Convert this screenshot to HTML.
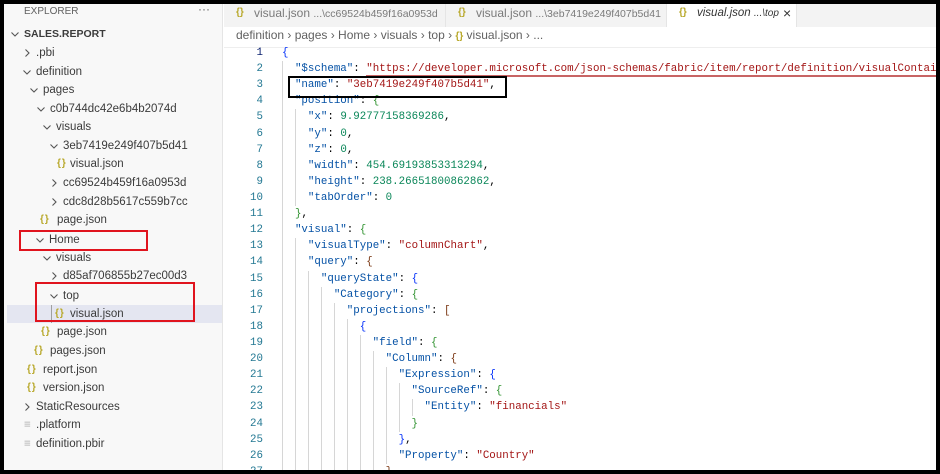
<!DOCTYPE html>
<html><head><meta charset="utf-8"><style>
*{margin:0;padding:0;box-sizing:border-box}
body{width:940px;height:474px;overflow:hidden;background:#000;position:relative;font-family:"Liberation Sans",sans-serif}
#frame{position:absolute;left:4px;top:4px;width:932px;height:466px;background:#fff;overflow:hidden}
#side{position:absolute;left:0;top:0;width:219px;height:466px;background:#f8f8f8;border-right:1px solid #e5e5e5}
.r{position:absolute;left:0;width:219px;height:18px;font-size:11.5px;color:#3b3b3b;line-height:18px;white-space:nowrap}
.cv{position:absolute;top:4px;width:10px;height:10px}
.br{position:absolute;color:#b8a82a;font-size:10px;font-weight:bold;letter-spacing:1px}
#tabs{position:absolute;left:220px;top:0;width:712px;height:23px;background:#f3f3f3}
.tab{position:absolute;top:0;height:23px;font-size:12px;color:#7a7a7a;line-height:18px;border-right:1px solid #e5e5e5;white-space:nowrap}
#crumb{position:absolute;left:232px;top:24px;font-size:12px;color:#616161;white-space:nowrap}
#code{position:absolute;left:220px;top:41px;width:712px;font-family:"Liberation Mono",monospace;font-size:10.8px}
.l{height:16.12px;line-height:16.12px;white-space:pre;position:relative}
.n{position:absolute;left:0;width:39px;text-align:right;color:#237893}
.c{position:absolute;left:58px}
.g{display:inline-block;width:2ch;height:16.12px;border-left:1px solid #d6d6d6;vertical-align:top}
.k{color:#0451a5}.s{color:#a31515}.m{color:#098658}
.b1{color:#0431fa}.b2{color:#319331}.b3{color:#7b3814}
.red{position:absolute;border:2px solid #e0141e}
</style></head><body>
<svg width="0" height="0" style="position:absolute"><defs>
<symbol id="d" viewBox="0 0 10 10"><path d="M1.5 3.5l3.5 3.5 3.5-3.5" stroke="#555" stroke-width="1.1" fill="none"/></symbol>
<symbol id="rt" viewBox="0 0 10 10"><path d="M3.5 1.5l3.5 3.5-3.5 3.5" stroke="#555" stroke-width="1.1" fill="none"/></symbol>
</defs></svg>
<div id="frame">
<div id="side">
  <div style="position:absolute;left:20px;top:2px;font-size:10px;color:#616161">EXPLORER</div>
  <div style="position:absolute;left:194px;top:-2px;font-size:12px;color:#616161">···</div>
  <div class="r" style="top:21px"><svg class="cv" style="left:6px"><use href="#d"/></svg><b style="position:absolute;left:20px;font-size:10.5px">SALES.REPORT</b></div>
  <div class="r" style="top:40px"><svg class="cv" style="left:18px"><use href="#rt"/></svg><span style="position:absolute;left:32px">.pbi</span></div>
  <div class="r" style="top:59px"><svg class="cv" style="left:18px"><use href="#d"/></svg><span style="position:absolute;left:32px">definition</span></div>
  <div class="r" style="top:77px"><svg class="cv" style="left:25px"><use href="#d"/></svg><span style="position:absolute;left:39px">pages</span></div>
  <div class="r" style="top:96px"><svg class="cv" style="left:32px"><use href="#d"/></svg><span style="position:absolute;left:46px">c0b744dc42e6b4b2074d</span></div>
  <div class="r" style="top:114px"><svg class="cv" style="left:38px"><use href="#d"/></svg><span style="position:absolute;left:52px">visuals</span></div>
  <div class="r" style="top:133px"><svg class="cv" style="left:45px"><use href="#d"/></svg><span style="position:absolute;left:59px">3eb7419e249f407b5d41</span></div>
  <div class="r" style="top:151px"><span class="br" style="left:53px">{}</span><span style="position:absolute;left:66px">visual.json</span></div>
  <div class="r" style="top:170px"><svg class="cv" style="left:45px"><use href="#rt"/></svg><span style="position:absolute;left:59px">cc69524b459f16a0953d</span></div>
  <div class="r" style="top:189px"><svg class="cv" style="left:45px"><use href="#rt"/></svg><span style="position:absolute;left:59px">cdc8d28b5617c559b7cc</span></div>
  <div class="r" style="top:207px"><span class="br" style="left:36px">{}</span><span style="position:absolute;left:53px">page.json</span></div>
  <div class="r" style="top:227px"><svg class="cv" style="left:31px"><use href="#d"/></svg><span style="position:absolute;left:45px">Home</span></div>
  <div class="r" style="top:245px"><svg class="cv" style="left:38px"><use href="#d"/></svg><span style="position:absolute;left:52px">visuals</span></div>
  <div class="r" style="top:263px"><svg class="cv" style="left:45px"><use href="#rt"/></svg><span style="position:absolute;left:59px">d85af706855b27ec00d3</span></div>
  <div class="r" style="top:283px"><svg class="cv" style="left:45px"><use href="#d"/></svg><span style="position:absolute;left:59px">top</span></div>
  <div class="r" style="top:301px;left:3px;width:215px;background:#e4e6f1"><span style="position:absolute;left:44px;top:0;width:1px;height:18px;background:#a0a0a0"></span><span class="br" style="left:48px">{}</span><span style="position:absolute;left:63px">visual.json</span></div>
  <div class="r" style="top:319px"><span class="br" style="left:37px">{}</span><span style="position:absolute;left:53px">page.json</span></div>
  <div class="r" style="top:338px"><span class="br" style="left:30px">{}</span><span style="position:absolute;left:46px">pages.json</span></div>
  <div class="r" style="top:357px"><span class="br" style="left:23px">{}</span><span style="position:absolute;left:39px">report.json</span></div>
  <div class="r" style="top:375px"><span class="br" style="left:23px">{}</span><span style="position:absolute;left:39px">version.json</span></div>
  <div class="r" style="top:394px"><svg class="cv" style="left:18px"><use href="#rt"/></svg><span style="position:absolute;left:32px">StaticResources</span></div>
  <div class="r" style="top:412px"><span style="position:absolute;left:20px;color:#aaa">≡</span><span style="position:absolute;left:32px">.platform</span></div>
  <div class="r" style="top:431px"><span style="position:absolute;left:20px;color:#aaa">≡</span><span style="position:absolute;left:32px">definition.pbir</span></div>
  <div class="red" style="left:15px;top:226px;width:129px;height:21px"></div>
  <div class="red" style="left:31px;top:278px;width:160px;height:40px"></div>
</div>
<div id="tabs">
  <div class="tab" style="left:0;width:222px"><span style="color:#b8a82a;position:absolute;left:12px;font-size:10px;font-weight:bold">{}</span><span style="position:absolute;left:30px">visual.json <span style="font-size:10.5px">...\cc69524b459f16a0953d</span></span></div>
  <div class="tab" style="left:222px;width:221px"><span style="color:#b8a82a;position:absolute;left:12px;font-size:10px;font-weight:bold">{}</span><span style="position:absolute;left:30px">visual.json <span style="font-size:10.5px">...\3eb7419e249f407b5d41</span></span></div>
  <div class="tab" style="left:443px;width:130px;background:#fff;color:#333"><span style="color:#b8a82a;position:absolute;left:12px;font-size:10px;font-weight:bold">{}</span><span style="position:absolute;left:30px;font-style:italic;font-size:11.5px">visual.json <span style="font-size:10px">...\top</span></span><span style="position:absolute;left:116px;font-size:14px">×</span></div>
</div>
<div id="crumb">definition › pages › Home › visuals › top › <span style="color:#b8a82a;font-size:10px;font-weight:bold">{}</span> visual.json › ...</div>
<div style="position:absolute;left:220px;top:43px;width:712px;height:1px;background:#eee"></div>
<div id="code">
<div class="l"><span class="n" style="color:#0b216f">1</span><span class="c"><span class="b1">{</span></span></div>
<div class="l"><span class="n">2</span><span class="c"><span class="g"></span><span class="k">"$schema"</span>: <span class="s" style="border-bottom:2px solid #c86464">"https://developer.microsoft.com/json-schemas/fabric/item/report/definition/visualContainer</span></span></div>
<div class="l"><span class="n">3</span><span class="c"><span class="g"></span><span class="k">"name"</span>: <span class="s">"3eb7419e249f407b5d41"</span>,</span></div>
<div class="l"><span class="n">4</span><span class="c"><span class="g"></span><span class="k">"position"</span>: <span class="b2">{</span></span></div>
<div class="l"><span class="n">5</span><span class="c"><span class="g"></span><span class="g"></span><span class="k">"x"</span>: <span class="m">9.92777158369286</span>,</span></div>
<div class="l"><span class="n">6</span><span class="c"><span class="g"></span><span class="g"></span><span class="k">"y"</span>: <span class="m">0</span>,</span></div>
<div class="l"><span class="n">7</span><span class="c"><span class="g"></span><span class="g"></span><span class="k">"z"</span>: <span class="m">0</span>,</span></div>
<div class="l"><span class="n">8</span><span class="c"><span class="g"></span><span class="g"></span><span class="k">"width"</span>: <span class="m">454.69193853313294</span>,</span></div>
<div class="l"><span class="n">9</span><span class="c"><span class="g"></span><span class="g"></span><span class="k">"height"</span>: <span class="m">238.26651800862862</span>,</span></div>
<div class="l"><span class="n">10</span><span class="c"><span class="g"></span><span class="g"></span><span class="k">"tabOrder"</span>: <span class="m">0</span></span></div>
<div class="l"><span class="n">11</span><span class="c"><span class="g"></span><span class="b2">}</span>,</span></div>
<div class="l"><span class="n">12</span><span class="c"><span class="g"></span><span class="k">"visual"</span>: <span class="b2">{</span></span></div>
<div class="l"><span class="n">13</span><span class="c"><span class="g"></span><span class="g"></span><span class="k">"visualType"</span>: <span class="s">"columnChart"</span>,</span></div>
<div class="l"><span class="n">14</span><span class="c"><span class="g"></span><span class="g"></span><span class="k">"query"</span>: <span class="b3">{</span></span></div>
<div class="l"><span class="n">15</span><span class="c"><span class="g"></span><span class="g"></span><span class="g"></span><span class="k">"queryState"</span>: <span class="b1">{</span></span></div>
<div class="l"><span class="n">16</span><span class="c"><span class="g"></span><span class="g"></span><span class="g"></span><span class="g"></span><span class="k">"Category"</span>: <span class="b2">{</span></span></div>
<div class="l"><span class="n">17</span><span class="c"><span class="g"></span><span class="g"></span><span class="g"></span><span class="g"></span><span class="g"></span><span class="k">"projections"</span>: <span class="b3">[</span></span></div>
<div class="l"><span class="n">18</span><span class="c"><span class="g"></span><span class="g"></span><span class="g"></span><span class="g"></span><span class="g"></span><span class="g"></span><span class="b1">{</span></span></div>
<div class="l"><span class="n">19</span><span class="c"><span class="g"></span><span class="g"></span><span class="g"></span><span class="g"></span><span class="g"></span><span class="g"></span><span class="g"></span><span class="k">"field"</span>: <span class="b2">{</span></span></div>
<div class="l"><span class="n">20</span><span class="c"><span class="g"></span><span class="g"></span><span class="g"></span><span class="g"></span><span class="g"></span><span class="g"></span><span class="g"></span><span class="g"></span><span class="k">"Column"</span>: <span class="b3">{</span></span></div>
<div class="l"><span class="n">21</span><span class="c"><span class="g"></span><span class="g"></span><span class="g"></span><span class="g"></span><span class="g"></span><span class="g"></span><span class="g"></span><span class="g"></span><span class="g"></span><span class="k">"Expression"</span>: <span class="b1">{</span></span></div>
<div class="l"><span class="n">22</span><span class="c"><span class="g"></span><span class="g"></span><span class="g"></span><span class="g"></span><span class="g"></span><span class="g"></span><span class="g"></span><span class="g"></span><span class="g"></span><span class="g"></span><span class="k">"SourceRef"</span>: <span class="b2">{</span></span></div>
<div class="l"><span class="n">23</span><span class="c"><span class="g"></span><span class="g"></span><span class="g"></span><span class="g"></span><span class="g"></span><span class="g"></span><span class="g"></span><span class="g"></span><span class="g"></span><span class="g"></span><span class="g"></span><span class="k">"Entity"</span>: <span class="s">"financials"</span></span></div>
<div class="l"><span class="n">24</span><span class="c"><span class="g"></span><span class="g"></span><span class="g"></span><span class="g"></span><span class="g"></span><span class="g"></span><span class="g"></span><span class="g"></span><span class="g"></span><span class="g"></span><span class="b2">}</span></span></div>
<div class="l"><span class="n">25</span><span class="c"><span class="g"></span><span class="g"></span><span class="g"></span><span class="g"></span><span class="g"></span><span class="g"></span><span class="g"></span><span class="g"></span><span class="g"></span><span class="b1">}</span>,</span></div>
<div class="l"><span class="n">26</span><span class="c"><span class="g"></span><span class="g"></span><span class="g"></span><span class="g"></span><span class="g"></span><span class="g"></span><span class="g"></span><span class="g"></span><span class="g"></span><span class="k">"Property"</span>: <span class="s">"Country"</span></span></div>
<div class="l"><span class="n">27</span><span class="c"><span class="g"></span><span class="g"></span><span class="g"></span><span class="g"></span><span class="g"></span><span class="g"></span><span class="g"></span><span class="g"></span><span class="b3">}</span></span></div>
</div>
<div style="position:absolute;left:284px;top:72px;width:219px;height:22px;border:2.5px solid #000"></div>
</div>
</body></html>
